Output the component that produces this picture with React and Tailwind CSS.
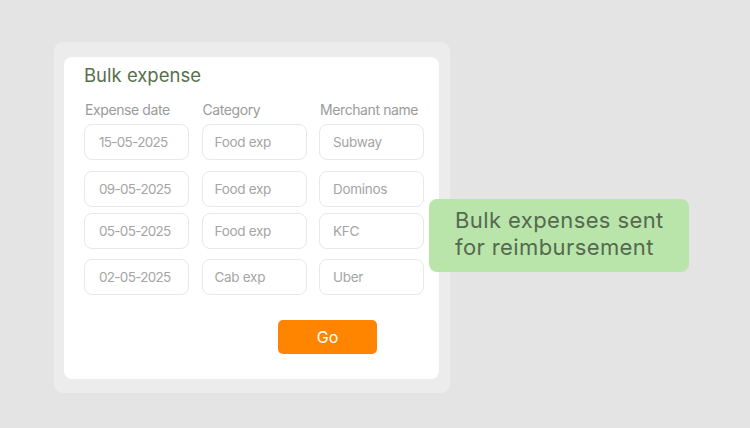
import React from "react";

const rows = [
  ["15-05-2025", "Food exp", "Subway", "mt-0"],
  ["09-05-2025", "Food exp", "Dominos", "mt-[11px]"],
  ["05-05-2025", "Food exp", "KFC", "mt-[6px]"],
  ["02-05-2025", "Cab exp", "Uber", "mt-[10px]"],
];

function Field({ children, pad, track }) {
  return (
    <div className={`h-[36px] w-[105px] rounded-[8px] border-[1.5px] border-[#e8e8e8] bg-white flex items-center ${pad} ${track} text-[13.5px] text-[#a5a5a5]`}>
      {children}
    </div>
  );
}

export default function App() {
  return (
    <div
      className="relative w-[750px] h-[428px] bg-[#e4e4e4] overflow-hidden"
      style={{ fontFamily: "Inter, 'Noto Sans', sans-serif" }}
    >
      <div className="ml-[54px] pt-[42px]">
        <div className="w-[396px] h-[351px] rounded-[9px] bg-[#ececec] pt-[15px] pl-[10px]">
          <div className="w-[375px] h-[322px] rounded-[8px] bg-white pl-[20px] pt-[6px]">
            <div className="text-[18.5px] leading-[24px] text-[#57704c]">Bulk expense</div>
            <div className="mt-[13px] grid grid-cols-[105px_105px_105px] gap-x-[12.5px] text-[14px] leading-[20px] tracking-[-0.4px] text-[#9b9b9b]">
              <div className="pl-[1px]">Expense date</div>
              <div className="pl-[1px]">Category</div>
              <div className="pl-[1px]">Merchant name</div>
            </div>
            <div className="mt-[4px] flex flex-col">
              {rows.map(([d, c, m, mt]) => (
                <div key={d} className={`grid grid-cols-[105px_105px_105px] gap-x-[12.5px] ${mt}`}>
                  <Field pad="pl-[14px]" track="tracking-[-0.7px]">{d}</Field>
                  <Field pad="pl-[12px]" track="tracking-[-0.3px]">{c}</Field>
                  <Field pad="pl-[13px]" track="tracking-[-0.3px]">{m}</Field>
                </div>
              ))}
            </div>
            <div className="mt-[25px] ml-[194px] w-[99px] h-[34px] rounded-[5px] bg-[#ff8500] flex items-center justify-center text-white text-[16px]">
              Go
            </div>
          </div>
        </div>
      </div>
      <div className="absolute left-[429px] top-[199px] w-[260px] h-[73px] rounded-[8px] bg-[#b9e5aa] pl-[26px] pt-[8px] text-[22px] leading-[27px] tracking-[0.4px] text-[#55694f]">
        <div>Bulk expenses sent</div>
        <div>for reimbursement</div>
      </div>
    </div>
  );
}
